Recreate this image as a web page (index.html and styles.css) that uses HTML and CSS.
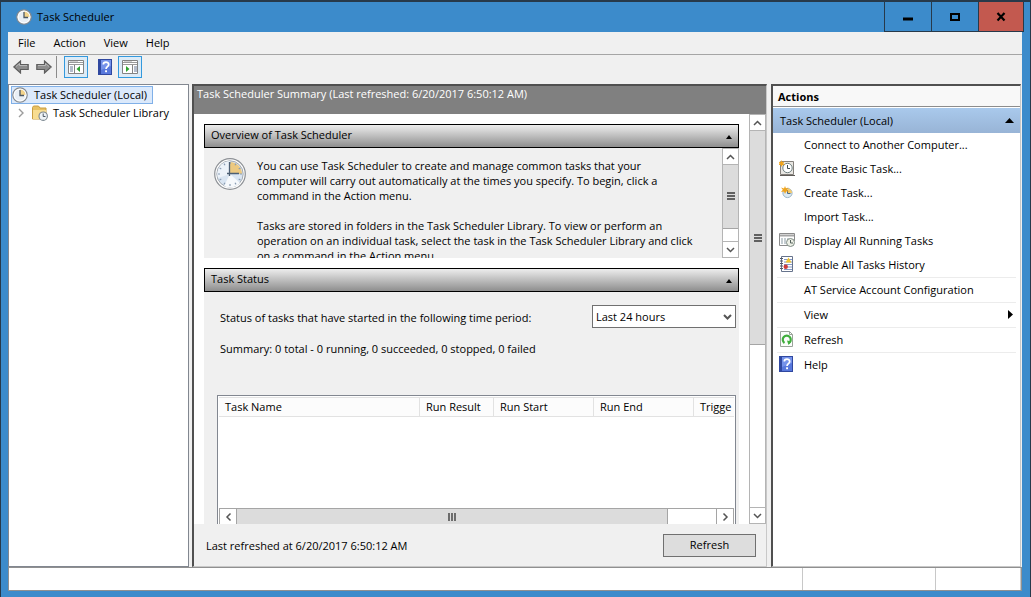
FILE: index.html
```html
<!DOCTYPE html>
<html lang="en">
<head>
<meta charset="utf-8">
<title>Task Scheduler</title>
<link rel="stylesheet" href="styles.css">
</head>
<body>
<svg class="sprites" aria-hidden="true">
  <symbol id="clock" viewBox="0 0 32 32">
    <circle cx="16" cy="16" r="15.3" fill="#fdfdfd" stroke="#8b8f94" stroke-width="1.2"/>
    <circle cx="16" cy="16" r="13.2" fill="#d9e5f2" stroke="#a4aab1" stroke-width="1"/>
    <path d="M4 20A13 13 0 0 1 16 3V16Z" fill="#edf3fa"/>
    <path d="M16 16 26 25A13 13 0 0 1 10 28Z" fill="#f6f9fc"/>
    <path d="M16 16V4A12 12 0 0 1 28 16Z" fill="#ecc981"/>
    <path d="M16 4v2M28 16h-2M16 28v-2M4 16h2M22 5.6l-1 1.7M26.4 10l-1.7 1M26.4 22l-1.7-1M22 26.4l-1-1.7M10 26.4l1-1.7M5.6 22l1.7-1M5.6 10l1.7 1M10 5.6l1 1.7" stroke="#8a9db4" stroke-width="1.2"/>
    <path d="M15.500 4v14M13 15.500h12" stroke="#4c5f74" stroke-width="1.300"/>
  </symbol>
  <symbol id="clock-small" viewBox="0 0 16 16">
    <circle cx="8" cy="8" r="7.2" fill="#e9eff5" stroke="#85898d" stroke-width="1.2"/>
    <circle cx="8" cy="8" r="5.9" fill="none" stroke="#fff" stroke-width="1"/>
    <path d="M8 8V2.5A5.5 5.5 0 0 1 13.500 8Z" fill="#f3d48c"/>
    <path d="M8 3v5.500h4" fill="none" stroke="#4c5864" stroke-width="1.3"/>
  </symbol>
  <symbol id="help" viewBox="0 0 14 16">
    <rect width="14" height="16" fill="#3048a0"/>
    <rect x="3" y="1" width="10" height="14" fill="#5878dc"/>
    <path d="M3 1h10v6L3 11Z" fill="#7592ea"/>
    <path d="M5.300 5.500C5.300 2.400 10.700 2.400 10.700 5.400 10.700 7.500 8 7.600 8 10" fill="none" stroke="#fff" stroke-width="1.700"/>
    <rect x="7.100" y="11.300" width="1.900" height="1.900" fill="#fff"/>
  </symbol>
  <symbol id="back" viewBox="0 0 16 14">
    <path d="M.8 7 7.500 1V4.500H15.200V9.500H7.500V13Z" fill="#8d8d8d" stroke="#5e5e5e" stroke-width="1.200"/>
    <path d="M3 6.500 6.500 3.500V5.500H14" fill="none" stroke="#b9b9b9"/>
  </symbol>
  <symbol id="up" viewBox="0 0 9 6"><path d="M1 5 4.500 1.500 8 5" fill="none" stroke="#555" stroke-width="1.500"/></symbol>
  <symbol id="grip" viewBox="0 0 8 8"><path d="M0 1h8M0 4h8M0 7h8" stroke="#606060" stroke-width="1.800"/></symbol>
  <symbol id="star" viewBox="0 0 8 8"><path d="M4 0 5 2.600 7.500 1.500 6 4 8 5.500 5.200 5.600 4 8 3 5.500 0 6 1.800 3.800 0 1.500 3 2.500Z" fill="#f0a41c"/></symbol>
</svg>

<div class="window">
  <header class="titlebar">
    <svg class="icon"><use href="#clock-small"/></svg>
    <h1 class="title">Task Scheduler</h1>
    <div class="controls">
      <button class="control" aria-label="Minimize"><svg class="control-icon" viewBox="0 0 12 10"><path d="M1 7h10" stroke="#000" stroke-width="3"/></svg></button>
      <button class="control" aria-label="Maximize"><svg class="control-icon" viewBox="0 0 12 10"><path d="M2 2h8v6H2Z" fill="none" stroke="#000" stroke-width="2"/></svg></button>
      <button class="control control-close" aria-label="Close"><svg class="control-icon" viewBox="0 0 12 10"><path d="M2.500 1 9.500 8.500M9.500 1 2.500 8.500" stroke="#000" stroke-width="2.200"/></svg></button>
    </div>
  </header>

  <div class="client">
    <nav class="menubar">
      <button class="menu">File</button>
      <button class="menu">Action</button>
      <button class="menu">View</button>
      <button class="menu">Help</button>
    </nav>

    <div class="toolbar">
      <button class="tool" aria-label="Back"><svg class="arrow"><use href="#back"/></svg></button>
      <button class="tool" aria-label="Forward"><svg class="arrow flip-x"><use href="#back"/></svg></button>
      <span class="tool-divider"></span>
      <button class="tool tool-on" aria-label="Show or hide console tree">
        <svg class="icon" viewBox="0 0 16 16"><path d="M.5 1.500h15v13H.5Z" fill="#fff" stroke="#838383"/><path d="M1 3.500h14M1 5.500h14" stroke="#9a9a9a"/><path d="M2 2.500h8" stroke="#d0d0d0"/><path d="M6.500 6v8" stroke="#838383"/><path d="M2 8h3M2 10h3M2 12h3" stroke="#6a7b98"/><path d="M12 7v6L8.500 10Z" fill="#2ea22e"/></svg>
      </button>
      <button class="tool tool-help" aria-label="Help"><svg class="help"><use href="#help"/></svg></button>
      <button class="tool tool-on" aria-label="Show or hide action pane">
        <svg class="icon" viewBox="0 0 16 16"><path d="M.5 1.500h15v13H.5Z" fill="#fff" stroke="#838383"/><path d="M1 3.500h14M1 5.500h14" stroke="#9a9a9a"/><path d="M2 2.500h8" stroke="#d0d0d0"/><path d="M10.500 6v8" stroke="#838383"/><path d="M12 8h3M12 10h3M12 12h3" stroke="#6a7b98"/><path d="M4 7v6L7.500 10Z" fill="#2ea22e"/></svg>
      </button>
    </div>

    <main class="panes">
      <aside class="tree">
        <div class="node node-root"><svg class="icon"><use href="#clock-small"/></svg><span class="node-label">Task Scheduler (Local)</span></div>
        <div class="node node-child">
          <svg class="chevron" viewBox="0 0 6 10"><path d="M1 1 5 5 1 9" fill="none" stroke="#9c9c9c" stroke-width="1.400"/></svg>
          <svg class="icon" viewBox="0 0 16 16"><path d="M.5 2.500 1.500 1h5L8 3h6v11H.5Z" fill="#e8c164" stroke="#c99e42"/><path d="M1 5h13v9H1Z" fill="#f8dd91"/><circle cx="11.200" cy="11.200" r="4.200" fill="#eef3f7" stroke="#7b8790" stroke-width="1.100"/><path d="M11.200 8.500v3h2.300" fill="none" stroke="#4c5864"/></svg>
          <span class="node-label">Task Scheduler Library</span>
        </div>
      </aside>

      <section class="summary">
        <h2 class="summary-head">Task Scheduler Summary (Last refreshed: 6/20/2017 6:50:12 AM)</h2>
        <div class="summary-body">
          <div class="sections">
            <section class="panel">
              <h3 class="panel-head">Overview of Task Scheduler<svg class="collapse" viewBox="0 0 6 4"><path d="M0 4 3 0 6 4Z"/></svg></h3>
              <div class="overview">
                <svg class="big-clock"><use href="#clock"/></svg>
                <div class="overview-text">
                  <p>You can use Task Scheduler to create and manage common tasks that your<br>computer will carry out automatically at the times you specify. To begin, click a<br>command in the Action menu.</p>
                  <p>Tasks are stored in folders in the Task Scheduler Library. To view or perform an<br>operation on an individual task, select the task in the Task Scheduler Library and click<br>on a command in the Action menu.</p>
                </div>
                <div class="vscroll">
                  <button class="vscroll-button" aria-label="Scroll up"><svg class="caret"><use href="#up"/></svg></button>
                  <div class="vscroll-track"><div class="vthumb vthumb-inner"><svg class="grip"><use href="#grip"/></svg></div></div>
                  <button class="vscroll-button vscroll-down" aria-label="Scroll down"><svg class="caret flip-y"><use href="#up"/></svg></button>
                </div>
              </div>
            </section>

            <section class="panel">
              <h3 class="panel-head">Task Status<svg class="collapse" viewBox="0 0 6 4"><path d="M0 4 3 0 6 4Z"/></svg></h3>
              <div class="status">
                <div class="period">
                  <label class="period-label" for="period">Status of tasks that have started in the following time period:</label>
                  <div class="select-wrap">
                    <select class="select" id="period"><option>Last 24 hours</option></select>
                    <svg class="select-arrow" viewBox="0 0 9 6"><path d="M1 1 4.500 4.500 8 1" fill="none" stroke="#555" stroke-width="2"/></svg>
                  </div>
                </div>
                <p class="totals">Summary: 0 total - 0 running, 0 succeeded, 0 stopped, 0 failed</p>
                <div class="list">
                  <div class="list-view">
                    <table class="table">
                      <thead><tr><th class="col-name">Task Name</th><th class="col-result">Run Result</th><th class="col-time">Run Start</th><th class="col-time">Run End</th><th class="col-last">Trigge</th></tr></thead>
                    </table>
                  </div>
                  <div class="hscroll">
                    <button class="hscroll-button" aria-label="Scroll left"><svg class="caret turn-left"><use href="#up"/></svg></button>
                    <div class="hscroll-track"><div class="hthumb"><svg class="grip turn-left"><use href="#grip"/></svg></div></div>
                    <button class="hscroll-button hscroll-right" aria-label="Scroll right"><svg class="caret turn-right"><use href="#up"/></svg></button>
                  </div>
                </div>
              </div>
            </section>
          </div>
          <div class="vscroll">
            <button class="vscroll-button" aria-label="Scroll up"><svg class="caret"><use href="#up"/></svg></button>
            <div class="vscroll-track"><div class="vthumb vthumb-outer"><svg class="grip"><use href="#grip"/></svg></div></div>
            <button class="vscroll-button vscroll-down" aria-label="Scroll down"><svg class="caret flip-y"><use href="#up"/></svg></button>
          </div>
        </div>
        <footer class="summary-foot">
          <span>Last refreshed at 6/20/2017 6:50:12 AM</span>
          <button class="refresh">Refresh</button>
        </footer>
      </section>

      <aside class="actions">
        <h2 class="actions-head">Actions</h2>
        <h3 class="actions-group">Task Scheduler (Local)<svg class="group-arrow" viewBox="0 0 9 5"><path d="M0 5 4.500 0 9 5Z"/></svg></h3>
        <ul class="action-list">
          <li><button class="action"><span class="icon"></span>Connect to Another Computer...</button></li>
          <li><button class="action"><svg class="icon" viewBox="0 0 16 16"><path d="M1.500 1.500h13v13h-13Z" fill="#e8e6e2" stroke="#85817c"/><path d="M1 15.500h15" stroke="#5f5b57"/><circle cx="8.500" cy="8" r="4.700" fill="#fff" stroke="#6e7f7f"/><path d="M8.500 5v3.500H11" fill="none" stroke="#3e4c50"/><use href="#star" x="-1" y="0" width="7" height="7"/></svg>Create Basic Task...</button></li>
          <li><button class="action"><svg class="icon" viewBox="0 0 16 16"><circle cx="8.500" cy="9" r="4.600" fill="#dceaf3" stroke="#9bb4c5"/><path d="M8.500 9V4.500A4.500 4.500 0 0 1 13 9Z" fill="#f4ca6c"/><path d="M8.500 6v3.500h3" fill="none" stroke="#506b80"/><use href="#star" x="2" y="2" width="8" height="8"/></svg>Create Task...</button></li>
          <li><button class="action"><span class="icon"></span>Import Task...</button></li>
          <li><button class="action"><svg class="icon" viewBox="0 0 16 16"><path d="M.5 1.500h15v12H.5Z" fill="#fff" stroke="#8b8b8b"/><path d="M1 3.500h14" stroke="#a5a5a5" stroke-width="2"/><path d="M2 7h8M2 9h6M2 11h5" stroke="#8a9ba4" stroke-dasharray="2 1"/><path d="M9 14h7V9h-2Z" fill="#fff"/><circle cx="11.500" cy="10.500" r="4" fill="#edf0e6" stroke="#7e8b85"/><path d="M11.500 8v3H14" fill="none" stroke="#55625d"/></svg>Display All Running Tasks</button></li>
          <li><button class="action"><svg class="icon" viewBox="0 0 16 16"><path d="M2.500.5h11v15h-11Z" fill="#fff" stroke="#66738c"/><path d="M1 2.500h3M1 5h3M1 7.500h3M1 10h3M1 12.500h3" stroke="#4e5565"/><path d="M5 3.500h8M5 6h8M5 8.500h8M5 11h8M5 13.500h8" stroke="#8498c4"/><path d="M9.500 1.500 12.500 6.500h-6Z" fill="#f3c62e"/><circle cx="6.700" cy="10.700" r="2.200" fill="#cd3c3c"/></svg>Enable All Tasks History</button></li>
          <li class="split"><button class="action"><span class="icon"></span>AT Service Account Configuration</button></li>
          <li class="split"><button class="action"><span class="icon"></span>View<svg class="submenu" viewBox="0 0 5 9"><path d="M0 0 5 4.500 0 9Z"/></svg></button></li>
          <li class="split"><button class="action"><svg class="icon" viewBox="0 0 16 16"><path d="M1.500.5h9l3 3v12h-12Z" fill="#fbfdfb" stroke="#9aa39a"/><path d="M10.500.5v3h3" fill="none" stroke="#9aa39a"/><path d="M5.500 12A4 4 0 1 1 10 12" fill="none" stroke="#3fae3c" stroke-width="2.200"/><path d="M8 9.500 12.500 10.500 9.500 14Z" fill="#3fae3c"/></svg>Refresh</button></li>
          <li class="split"><button class="action"><svg class="icon" viewBox="0 0 16 16"><use href="#help" width="14" height="16"/></svg>Help</button></li>
        </ul>
      </aside>
    </main>

    <footer class="statusbar"><span class="status-main"></span><span class="status-cell"></span><span class="status-end"></span></footer>
  </div>
</div>
</body>
</html>
```

FILE: styles.css
```css
* { box-sizing: border-box; }

body {
  margin: 0;
  font: 11px/15px "Open Sans", "Noto Sans", sans-serif;
  color: #000;
}

h1, h2, h3, p, ul { margin: 0; padding: 0; font-size: inherit; font-weight: normal; }
ul { list-style: none; }

button {
  margin: 0;
  padding: 0;
  border: 0;
  border-radius: 0;
  background: none;
  font: inherit;
  color: inherit;
}

svg { display: block; flex: none; }
.sprites { position: absolute; width: 0; height: 0; }
.icon { flex: none; width: 16px; height: 16px; }
.flip-x { transform: scaleX(-1); }
.flip-y { transform: scaleY(-1); }
.turn-left { transform: rotate(-90deg); }
.turn-right { transform: rotate(90deg); }

.window {
  display: flex;
  flex-direction: column;
  height: 100vh;
  padding-bottom: 6px;
  border: 1px solid #27394a;
  border-width: 2px 1px 0;
  background: #3c8bcb;
  overflow: hidden;
}

/* Title bar */
.titlebar { display: flex; align-items: center; gap: 5px; height: 30px; padding: 0 6px 0 15px; }
.titlebar > .icon { margin-bottom: 1px; }
.title { flex: 1; padding-bottom: 2px; }
.controls { display: flex; align-self: stretch; border: 1px solid #27394a; border-top: 0; }
.control { display: grid; place-items: center; width: 47px; border-left: 1px solid #27394a; }
.control:first-child { width: 46px; border-left: 0; }
.control-close { width: 45px; background: #c3594f; }
.control-icon { width: 12px; height: 10px; }

.client { display: flex; flex: 1; flex-direction: column; min-height: 0; margin: 0 8px 0 7px; background: #f0f0f0; }

/* Menu and tools */
.menubar { display: flex; height: 23px; padding: 0 1px; border-bottom: 1px solid #a5a5a5; }
.menu { padding: 0 9px 2px; }
.toolbar { display: flex; align-items: center; gap: 7px; height: 29px; padding: 0 5px 5px; }
.tool { display: grid; place-items: center; }
.arrow { width: 16px; height: 14px; }
.help { width: 14px; height: 16px; }
.tool-divider { width: 1px; height: 22px; margin: 0 0 0 -3px; background: #8c8c8c; }
.tool-on { width: 24px; height: 22px; border: 1px solid #3399dd; background: #dcebf7; }
.tool-help { margin: 0 -1px 0 3px; }

/* Panes */
.panes { display: flex; flex: 1; min-height: 0; }

.tree { width: 181px; margin-right: 3px; padding: 1px 2px; border: 1px solid #828790; background: #fff; }
.node { display: flex; align-items: center; height: 18px; }
.node-label { padding-bottom: 2px; }
.node-root { width: max-content; padding-right: 5px; border: 1px solid #80b0e8; background: #dbe9fb; gap: 6px; }
.node-child { gap: 5px; padding-left: 7px; }
.chevron { width: 6px; height: 10px; margin-right: 3px; }

.summary {
  display: flex;
  flex: 1;
  flex-direction: column;
  min-width: 0;
  margin-right: 4px;
  border: 1px solid #c8c8c8;
  border-left: 2px solid #505050;
  border-top: 2px solid #505050;
  background: #fff;
}
.summary-head { height: 28px; padding-left: 3px; background: #808080; color: #fff; }
.summary-body { display: flex; flex: 1; min-height: 0; overflow: hidden; }
.sections { flex: 1; min-width: 0; padding: 10px; overflow: hidden; }
.panel { margin-bottom: 10px; background: #f0f0f0; }
.panel-head {
  display: flex;
  align-items: center;
  justify-content: space-between;
  height: 24px;
  padding: 0 6px 3px;
  border: 1px solid #000;
  background: linear-gradient(#ededed, #8e8e8e);
}
.collapse { width: 6px; height: 4px; margin-top: 4px; }

.overview { display: flex; height: 110px; overflow: hidden; }
.big-clock { width: 32px; height: 32px; margin: 10px 11px 0 10px; }
.overview-text { flex: 1; min-width: 0; padding-top: 10px; white-space: nowrap; }
.overview-text p { margin-bottom: 15px; }

/* Scroll bars */
.vscroll { display: flex; flex: none; flex-direction: column; width: 17px; border: 1px solid #b4b4b4; background: #fff; }
.vscroll-button { display: grid; place-items: center; height: 16px; border-bottom: 1px solid #b4b4b4; }
.vscroll-down { border-top: 1px solid #b4b4b4; border-bottom: 0; }
.caret { width: 9px; height: 6px; }
.grip { width: 8px; height: 8px; }
.vscroll-track { flex: 1; min-height: 0; }
.vthumb { display: grid; place-items: center; border-bottom: 1px solid #a5a5a5; background: #dcdcdc; }
.vthumb-inner { height: 84%; }
.vthumb-outer { height: 57%; }

.hscroll { display: flex; height: 17px; border: 1px solid #a5a5a5; background: #fff; }
.hscroll-button { display: grid; place-items: center; width: 17px; border-right: 1px solid #a5a5a5; }
.hscroll-right { border-right: 0; border-left: 1px solid #a5a5a5; }
.hscroll-track { flex: 1; }
.hthumb { display: grid; place-items: center; width: 90%; height: 100%; border-right: 1px solid #a5a5a5; background: #dcdcdc; }

/* Task status */
.status { padding: 13px 3px 0 13px; }
.period { display: flex; align-items: center; justify-content: space-between; padding-left: 3px; }
.period-label { padding-top: 2px; }
.select-wrap { position: relative; width: 144px; }
.select {
  display: block;
  width: 100%;
  height: 23px;
  padding: 0 3px;
  border: 1px solid #707070;
  border-radius: 0;
  background: #fff;
  font: inherit;
  color: inherit;
  appearance: none;
}
.select-arrow { position: absolute; right: 4px; top: 9px; width: 9px; height: 6px; pointer-events: none; }
.totals { margin: 13px 0 39px; padding-left: 3px; }
.list { padding: 1px; border: 1px solid #828790; background: #fff; }
.list-view { height: 111px; overflow: hidden; }
.table { width: 100%; table-layout: fixed; border-collapse: separate; border-spacing: 0; }
.table th { height: 20px; padding: 0 0 2px 6px; border: 1px solid #e2e2e2; border-left: 0; font-weight: normal; text-align: left; background: #fcfcfc; }
.table .col-last { border-right: 0; }
.col-name { width: 201px; }
.col-result { width: 74px; }
.col-time { width: 100px; }

.summary-foot { display: flex; flex: none; align-items: center; justify-content: space-between; height: 42px; padding: 0 10px 0 12px; background: #f0f0f0; }
.refresh { width: 93px; height: 23px; padding-bottom: 2px; border: 1px solid #707070; background: #dddddd; }

/* Actions */
.actions { width: 250px; margin-right: 1px; border: 1px solid #c8c8c8; border-left: 2px solid #505050; border-top: 2px solid #505050; background: #fff; }
.actions-head { height: 21px; padding: 3px 5px 0; border-bottom: 1px solid #8c8c8c; font-weight: bold; background: #f8f8f8; }
.actions-group {
  display: flex;
  align-items: center;
  justify-content: space-between;
  height: 25px;
  margin-top: 1px;
  padding: 0 6px 0 7px;
  background: linear-gradient(#a9c9ec, #98b4d6);
}
.group-arrow { width: 9px; height: 5px; }
.action-list { padding: 0 4px; }
.action { display: flex; align-items: center; gap: 9px; width: 100%; height: 24px; padding: 0 0 2px 2px; text-align: left; }
.split { border-top: 1px solid #ececec; }
.submenu { width: 5px; height: 9px; margin: 0 3px 0 auto; }

/* Status bar */
.statusbar { display: flex; height: 24px; border: 1px solid #909090; background: #fff; }
.status-main { flex: 1; border-right: 1px solid #c8c8c8; }
.status-cell { width: 133px; border-right: 1px solid #c8c8c8; }
.status-end { width: 85px; border-right: 1px solid #c8c8c8; }
```
